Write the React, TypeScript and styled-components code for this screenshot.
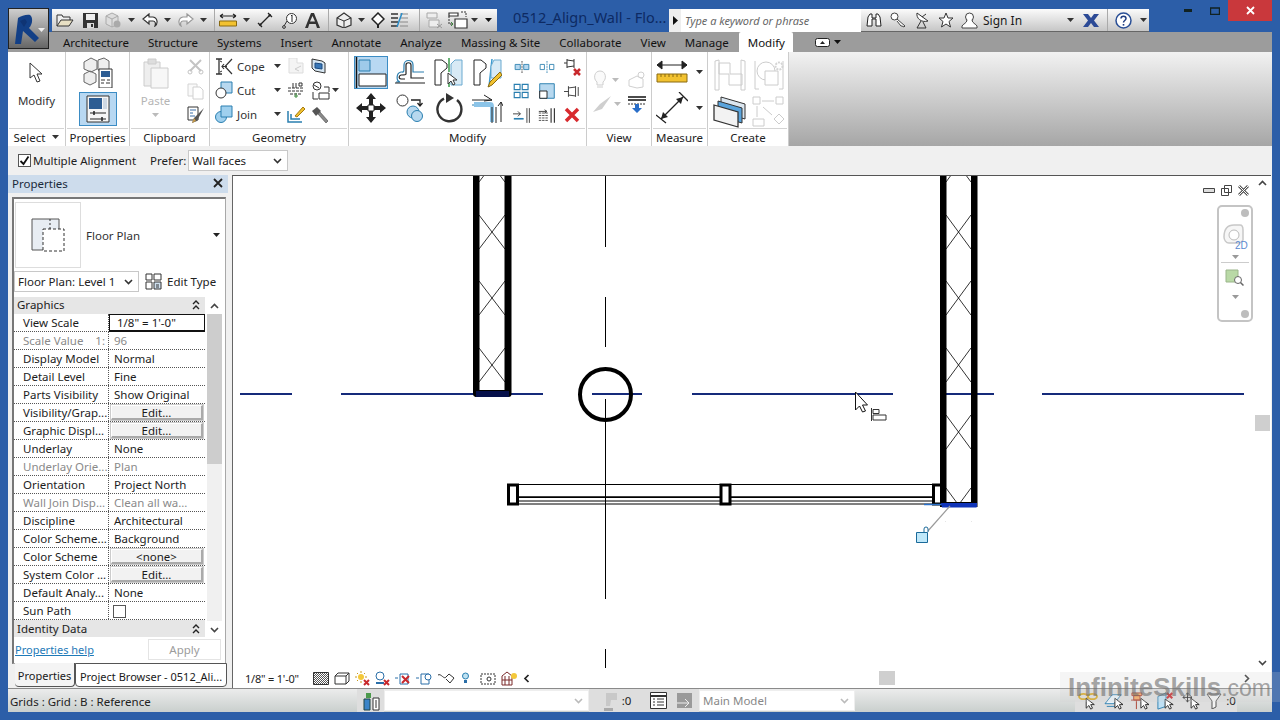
import React from "react"
import styled, { createGlobalStyle } from "styled-components"

const GlobalStyle = createGlobalStyle`
  html, body {
    margin: 0;
    padding: 0;
    width: 1280px;
    height: 720px;
    overflow: hidden;
    font-family: "Noto Sans", "Open Sans", sans-serif;
    font-size: 11.5px;
    color: #1a1a1a;
  }
  * { box-sizing: border-box; }
  svg { display: block; flex: none; }
`

const Window = styled.div`
  position: relative;
  width: 1280px;
  height: 720px;
  background: #2c5ea8;
  display: flex;
  flex-direction: column;
  overflow: hidden;
`

/* ---------- title bar ---------- */

const TitleBar = styled.div`
  height: 32px;
  display: flex;
  align-items: flex-end;
  padding-left: 52px;
  flex: none;
`

const AppButton = styled.div`
  position: absolute;
  left: 8px;
  top: 8px;
  width: 41px;
  height: 41px;
  border: 1px solid #222;
  background: linear-gradient(#cfcfcf, #666);
  display: flex;
  align-items: center;
  justify-content: center;
  padding-right: 5px;
  z-index: 2;
`

const AppCaret = styled.div`
  position: absolute;
  right: 3px;
  top: 19px;
`

const QuickBar = styled.div`
  width: 445px;
  height: 23px;
  display: flex;
  align-items: center;
  border-bottom: 1px solid #666;
  background: linear-gradient(#fbfbfb, #c6c6c6);
`

const Slot = styled.div<{ $w: number }>`
  width: ${({ $w }) => $w}px;
  height: 22px;
  display: flex;
  align-items: center;
  justify-content: center;
  flex: none;
`

const QatSeparator = styled.div`
  width: 1px;
  height: 22px;
  background: #aaa;
  flex: none;
`

const DocTitle = styled.div`
  width: 172px;
  padding: 2px 0 0 16px;
  height: 26px;
  color: #0d2a63;
  font-size: 14.5px;
  line-height: 18px;
  white-space: nowrap;
  flex: none;
`

const ArrowBox = styled.div`
  width: 12px;
  height: 23px;
  background: #eee;
  display: flex;
  align-items: center;
  justify-content: center;
  flex: none;
`

const SearchBox = styled.div`
  width: 180px;
  height: 23px;
  background: #fff;
  color: #666;
  font-style: italic;
  font-size: 11px;
  line-height: 23px;
  padding-left: 4px;
  white-space: nowrap;
  overflow: hidden;
  flex: none;
`

const InfoBar = styled(QuickBar)`
  width: 288px;
`

const SignIn = styled.span`
  width: 85px;
  padding-left: 3px;
  font-size: 12px;
  flex: none;
`

const WindowButtons = styled.div`
  position: absolute;
  right: 8px;
  top: 0;
  display: flex;
  align-items: flex-start;
`

const WindowButton = styled.div<{ $w: number; $close?: boolean }>`
  width: ${({ $w }) => $w}px;
  height: 21px;
  display: flex;
  align-items: center;
  justify-content: center;
  background: ${({ $close }) => ($close ? "#c9383c" : "transparent")};
`

/* ---------- ribbon ---------- */

const TabStrip = styled.div`
  height: 20px;
  margin: 0 8px;
  flex: none;
  background: #9c9c9c;
  display: flex;
  align-items: center;
  gap: 19px;
  padding-left: 55px;
  color: #111;
`

const Tab = styled.div<{ $active?: boolean }>`
  white-space: nowrap;
  height: 20px;
  line-height: 22px;
  ${({ $active }) =>
    $active &&
    `background:#fff;margin:0 -8px 0 -9px;padding:0 8px 0 9px;border-radius:2px 2px 0 0;`}
`

const TabToggle = styled.div`
  margin-left: 11px;
  display: flex;
  align-items: center;
  gap: 4px;
`

const Ribbon = styled.div`
  height: 94px;
  margin: 0 8px;
  flex: none;
  display: flex;
  background: linear-gradient(#f2f2f2, #a6a6a6);
`

const RibbonPanels = styled.div`
  display: flex;
  background: #fff;
  height: 94px;
  flex: none;
`

const Panel = styled.div<{ $w: number }>`
  width: ${({ $w }) => $w}px;
  display: flex;
  flex-direction: column;
  border-right: 1px solid #ccc;
  flex: none;
`

const PanelBody = styled.div`
  height: 76px;
  display: flex;
  flex: none;
`

const PanelLabel = styled.div`
  height: 18px;
  flex: none;
  margin: 0 1px;
  border-top: 1px solid #d4d4d4;
  text-align: center;
  line-height: 17px;
  padding-bottom: 1px;
  color: #222;
  display: flex;
  justify-content: center;
  align-items: center;
  gap: 7px;
`

const BigTool = styled.div<{ $top: number; $gap: number }>`
  width: 100%;
  display: flex;
  flex-direction: column;
  align-items: center;
  padding-top: ${({ $top }) => $top}px;
  gap: ${({ $gap }) => $gap}px;
`

const BigToolLabel = styled.div<{ $off?: boolean }>`
  color: ${({ $off }) => ($off ? "#b5b5b5" : "#333")};
  line-height: 16px;
`

const Stack = styled.div<{ $w: number; $top?: number }>`
  width: ${({ $w }) => $w}px;
  display: flex;
  flex-direction: column;
  align-items: center;
  padding-top: ${({ $top }) => $top || 0}px;
  flex: none;
`

const IconButton = styled.div<{ $on?: boolean }>`
  display: flex;
  align-items: center;
  justify-content: center;
  border: 1px solid ${({ $on }) => ($on ? "#3b8cc4" : "transparent")};
  background: ${({ $on }) => ($on ? "#b8d8f2" : "transparent")};
`

const PropButton = styled(IconButton)`
  width: 38px;
  height: 34px;
  margin-top: 4px;
`

const GeoGrid = styled.div`
  display: grid;
  grid-template-columns: 70px 22px 40px;
  grid-auto-rows: 24px;
  padding: 2px 0 0 5px;
  align-items: center;
`

const GeoCell = styled.div`
  display: flex;
  align-items: center;
  justify-content: center;
`

const GeoCellLeft = styled(GeoCell)`
  justify-content: flex-start;
  padding-left: 4px;
`

const NamedTool = styled.div`
  display: flex;
  align-items: center;
  gap: 4px;
  color: #333;
`

const NamedToolText = styled.span`
  width: 33px;
`

const Split = styled.div<{ $gap?: number }>`
  display: flex;
  align-items: center;
  gap: ${({ $gap }) => $gap || 2}px;
`

const ModifyBig = styled.div`
  display: grid;
  grid-template-columns: 39px 39px 39px 39px;
  grid-template-rows: 35px 36px;
  padding: 3px 0 0 2px;
  justify-items: center;
  align-items: center;
`

const ModifySmall = styled.div`
  display: grid;
  grid-template-columns: 25px 25px 25px;
  grid-auto-rows: 24px;
  padding: 3px 0 0 2px;
  justify-items: center;
  align-items: center;
`

const ViewGrid = styled.div`
  display: grid;
  grid-template-columns: 38px 24px;
  grid-auto-rows: 24px;
  padding: 16px 0 0 0;
  justify-items: center;
  align-items: center;
`

const MeasureCol = styled.div`
  display: flex;
  flex-direction: column;
  padding: 7px 0 0 4px;
  gap: 7px;
`

const CreateGrid = styled.div`
  display: grid;
  grid-template-columns: 40px 38px;
  grid-template-rows: 37px 37px;
  padding: 4px 0 0 2px;
  justify-items: center;
  align-items: center;
`

/* ---------- options bar ---------- */

const OptionsBar = styled.div`
  height: 29px;
  margin: 0 8px;
  flex: none;
  background: #f0f0f0;
  display: flex;
  align-items: center;
  padding-left: 10px;
  color: #222;
`

const CheckBox = styled.div`
  width: 13px;
  height: 13px;
  border: 1px solid #555;
  background: #fff;
  display: flex;
  align-items: center;
  justify-content: center;
  flex: none;
`

const OptionLabel = styled.span<{ $gap: number }>`
  margin-left: ${({ $gap }) => $gap}px;
`

const Combo = styled.div<{ $w: number; $off?: boolean }>`
  width: ${({ $w }) => $w}px;
  height: 21px;
  background: #fff;
  border: 1px solid ${({ $off }) => ($off ? "#eee" : "#c8c8c8")};
  display: flex;
  align-items: center;
  justify-content: space-between;
  padding: 0 5px 0 3px;
  color: ${({ $off }) => ($off ? "#888" : "#222")};
  flex: none;
`

/* ---------- main area ---------- */

const Main = styled.div`
  height: 513px;
  margin: 0 8px;
  flex: none;
  display: flex;
  background: #f0f0f0;
`

const PropertiesDock = styled.div`
  width: 220px;
  display: flex;
  flex-direction: column;
  flex: none;
`

const DockHeader = styled.div`
  height: 18px;
  background: #cddcec;
  display: flex;
  align-items: center;
  justify-content: space-between;
  padding: 0 5px 2px 4px;
  color: #1a2a3a;
  flex: none;
`

const DockBody = styled.div`
  margin: 4px 2px 0 4px;
  height: 467px;
  background: #fff;
  border: 1px solid #a8a8a8;
  border-top: 2px solid #777;
  border-left: 2px solid #777;
  padding: 3px 3px 0 0;
  display: flex;
  flex-direction: column;
  flex: none;
`

const TypeSelector = styled.div`
  height: 66px;
  display: flex;
  align-items: center;
  flex: none;
  padding-right: 2px;
`

const TypeThumb = styled.div`
  width: 66px;
  height: 66px;
  border: 1px solid #ddd;
  margin-left: 1px;
  display: flex;
  align-items: center;
  justify-content: center;
  flex: none;
`

const TypeName = styled.div`
  margin-left: 5px;
  flex: 1;
  color: #333;
`

const InstanceRow = styled.div`
  height: 21px;
  margin-top: 3px;
  display: flex;
  align-items: center;
  flex: none;
`

const EditType = styled.div`
  margin-left: 6px;
  display: flex;
  align-items: center;
  gap: 5px;
  color: #222;
`

const PropScroller = styled.div`
  margin-top: 5px;
  display: flex;
  height: 341px;
  flex: none;
`

const PropList = styled.div`
  width: 191px;
  flex: none;
`

const GroupHeader = styled.div<{ $lift?: boolean }>`
  height: 17px;
  background: #e6e6e6;
  display: flex;
  align-items: center;
  justify-content: space-between;
  padding: 0 5px ${({ $lift }) => ($lift ? 2 : 0)}px 3px;
  color: #222;
`

const PropRow = styled.div`
  height: 18px;
  display: grid;
  grid-template-columns: 95px 96px;
  border-bottom: 1px dotted #555;
  line-height: 17px;
`

const PropName = styled.div<{ $off?: boolean }>`
  padding-left: 9px;
  border-right: 1px dotted #555;
  white-space: pre;
  overflow: hidden;
  color: ${({ $off }) => ($off ? "#8a8a8a" : "#1c1c1c")};
`

const PropValue = styled.div<{ $off?: boolean }>`
  padding-left: 5px;
  white-space: nowrap;
  overflow: hidden;
  color: ${({ $off }) => ($off ? "#8a8a8a" : "#1c1c1c")};
`

const ScaleInput = styled.div`
  border: 1px solid #111;
  border-width: 1px 1px 2px 1px;
  height: 18px;
  padding-left: 7px;
  line-height: 15px;
  background: #fff;
`

const EditButton = styled.div`
  margin: 1px 2px 1px 2px;
  height: 15px;
  background: #f2f2f2;
  border: 1px solid #fff;
  border-right: 2px solid #aaa;
  border-bottom: 2px solid #aaa;
  box-shadow: 0 0 0 1px #ccc;
  text-align: center;
  line-height: 13px;
`

const SmallCheck = styled.div`
  width: 13px;
  height: 13px;
  border: 1px solid #555;
  margin: 3px 0 0 4px;
`

const PanelScroll = styled.div`
  width: 15px;
  margin-left: 2px;
  display: flex;
  flex-direction: column;
  flex: none;
`

const ScrollEnd = styled.div`
  height: 17px;
  display: flex;
  align-items: center;
  justify-content: center;
  flex: none;
`

const ScrollTrack = styled.div`
  flex: 1;
  background: #f0f0f0;
`

const ScrollThumb = styled.div`
  height: 150px;
  background: #cdcdcd;
`

const HelpRow = styled.div`
  height: 23px;
  display: flex;
  align-items: center;
  justify-content: space-between;
  padding-right: 1px;
`

const HelpLink = styled.span`
  color: #1e7ab8;
  text-decoration: underline;
  font-size: 11px;
  margin-left: 1px;
`

const ApplyButton = styled.div`
  width: 73px;
  height: 21px;
  border: 1px solid #e4e4e4;
  text-align: center;
  line-height: 20px;
  color: #9c9c9c;
`

const DockTabs = styled.div`
  height: 24px;
  display: flex;
  align-items: flex-start;
  padding-left: 7px;
  margin-top: -1px;
  font-size: 11px;
  flex: none;
`

const DockTab = styled.div<{ $active?: boolean; $w: number }>`
  width: ${({ $w }) => $w}px;
  height: 24px;
  background: ${({ $active }) => ($active ? "#f4f4f4" : "#fff")};
  border: 1px solid #555;
  border-top: ${({ $active }) => ($active ? "0" : "1px solid #555")};
  border-left: ${({ $active }) => ($active ? "0" : "1px solid #555")};
  border-radius: 0 0 4px 4px;
  text-align: center;
  line-height: 25px;
  white-space: nowrap;
  overflow: hidden;
`

const ViewShell = styled.div`
  width: 1039px;
  margin-left: 4px;
  background: #fff;
  border-left: 1px solid #666;
  border-top: 1px solid #555;
  display: flex;
  flex: none;
`

const ViewColumn = styled.div`
  width: 1021px;
  display: flex;
  flex-direction: column;
  flex: none;
`

const DrawingArea = styled.div`
  position: relative;
  height: 492px;
  flex: none;
`

const ViewControls = styled.div`
  position: absolute;
  right: 5px;
  top: 9px;
  display: flex;
  align-items: center;
  gap: 6px;
`

const NavBar = styled.div`
  position: absolute;
  left: 984px;
  top: 29px;
  width: 36px;
  height: 117px;
  border: 2px solid #c4c4c4;
  border-radius: 5px;
  background: #fff;
  display: flex;
  flex-direction: column;
  align-items: center;
  padding-top: 2px;
`

const NavDivider = styled.div`
  width: 28px;
  height: 1px;
  background: #ccc;
  margin: 3px 0 6px;
`

const NavWheel = styled.div`
  margin: 6px 0 2px;
`

const NavCaret = styled.div`
  margin-top: 8px;
`

const NavBadge = styled.div`
  width: 8px;
  height: 8px;
  border-radius: 50%;
  background: #bdbdbd;
  align-self: flex-end;
  margin-right: 2px;
`

const NavBadgeBottom = styled(NavBadge)`
  margin-top: auto;
  margin-bottom: 2px;
`

const ViewBar = styled.div`
  height: 20px;
  display: flex;
  align-items: center;
  padding-left: 12px;
  font-size: 11px;
  letter-spacing: -0.2px;
  flex: none;
  color: #222;
`

const ViewScaleText = styled.span`
  width: 68px;
  flex: none;
`

const ViewIcons = styled.div`
  display: flex;
  align-items: center;
  gap: 5px;
`

const BulbSlot = styled.div`
  margin: 0 6px 0 2px;
`

const HScroll = styled.div`
  flex: 1;
  display: flex;
  align-items: center;
  justify-content: space-between;
  padding-right: 4px;
  padding-left: 349px;
`

const HThumb = styled.div`
  width: 16px;
  height: 14px;
  background: #cfcfcf;
`

const VScroll = styled.div`
  width: 18px;
  flex: none;
  display: flex;
  flex-direction: column;
  align-items: center;
  justify-content: space-between;
  padding: 4px 2px 22px 0;
`

const VThumb = styled.div`
  width: 15px;
  height: 16px;
  background: #cfcfcf;
`

/* ---------- status bar ---------- */

const StatusBar = styled.div`
  height: 24px;
  margin: 0 8px;
  flex: none;
  background: linear-gradient(#ececec, #c9cfcd);
  border-top: 1px solid #8a8a8a;
  display: flex;
  align-items: center;
  color: #222;
  padding-left: 2px;
`

const StatusText = styled.div`
  width: 347px;
  flex: none;
  padding-top: 2px;
`

const StatusTool = styled.div<{ $w: number }>`
  width: ${({ $w }) => $w}px;
  height: 23px;
  background: #dedede;
  display: flex;
  align-items: center;
  justify-content: center;
  gap: 4px;
  flex: none;
`

const RightTools = styled.div`
  margin-left: auto;
  margin-right: 35px;
  display: flex;
`

const Watermark = styled.div`
  position: absolute;
  right: -1px;
  top: 672px;
  height: 30px;
  padding-left: 8px;
  width: 221px;
  font-family: "Liberation Sans", Arial, sans-serif;
  font-weight: 700;
  font-size: 26px;
  line-height: 30px;
  color: rgba(110, 110, 110, 0.62);
  background: rgba(210, 210, 210, 0.22);
  white-space: nowrap;
  pointer-events: none;
`

const WatermarkThin = styled.span`
  font-weight: 400;
  font-size: 23px;
`

/* ---------- icons ---------- */

const Caret = ({ c = "#333" }: { c?: string }) => (
  <svg width="7" height="4" viewBox="0 0 7 4">
    <path d="M0 0h7L3.5 4z" fill={c} />
  </svg>
)

const Chevron = ({ c = "#444" }: { c?: string }) => (
  <svg width="9" height="6" viewBox="0 0 9 6">
    <path d="M1 1l3.5 3.5L8 1" fill="none" stroke={c} strokeWidth="1.6" />
  </svg>
)

const ChevronLeft = () => (
  <svg width="7" height="9" viewBox="0 0 7 9">
    <path d="M5.500 1L2 4.500 5.500 8" fill="none" stroke="#222" strokeWidth="1.7" />
  </svg>
)

const Up = () => (
  <svg width="9" height="6" viewBox="0 0 9 6">
    <path d="M1 5l3.5-3.5L8 5" fill="none" stroke="#444" strokeWidth="1.6" />
  </svg>
)

const DoubleUp = () => (
  <svg width="8" height="10" viewBox="0 0 8 10">
    <path d="M1 4l3-3 3 3M1 9l3-3 3 3" fill="none" stroke="#222" strokeWidth="1.4" />
  </svg>
)

const Cursor = ({ s = 22 }: { s?: number }) => (
  <svg width={s} height={s} viewBox="0 0 22 22">
    <path d="M4 1v15l4-3 3 7 3-1-3-7h5z" fill="#fff" stroke="#333" strokeWidth="1" />
  </svg>
)

const RevitLogo = () => (
  <svg width="28" height="30" viewBox="0 0 28 30">
    <path d="M3 30L6 4c3-2 9-4 12-3 3 2 3 9-1 13l10 10-4 4-12-11-2 13z" fill="#123f86" />
    <path d="M8 7l5-2 2 3-3 5z" fill="#0f3474" />
  </svg>
)

const OpenIcon = () => (
  <svg width="18" height="16" viewBox="0 0 18 16">
    <path d="M1 14V3h5l1 2h7v3" fill="#eee" stroke="#333" />
    <path d="M1 14l4-6h12l-4 6z" fill="#e8e0c4" stroke="#333" />
  </svg>
)

const SaveIcon = () => (
  <svg width="15" height="15" viewBox="0 0 15 15">
    <path d="M0 0h15v15H0z" fill="#333" />
    <path d="M3 1h9v6H3z" fill="#eee" />
    <path d="M4 10h7v5H4z" fill="#ddd" />
    <path d="M8 11h2v3H8z" fill="#333" />
  </svg>
)

const SyncIcon = () => (
  <svg width="18" height="18" viewBox="0 0 18 18">
    <path d="M2 5l6-3 6 3v8l-6 3-6-3z" fill="#ddd" stroke="#aaa" />
    <path d="M2 5l6 3 6-3M8 8v8" fill="none" stroke="#aaa" />
    <circle cx="13" cy="13" r="3.5" fill="#aaa" />
  </svg>
)

const UndoIcon = ({ flip, c = "#333" }: { flip?: boolean; c?: string }) => (
  <svg width="17" height="14" viewBox="0 0 17 14" style={flip ? { transform: "scaleX(-1)" } : undefined}>
    <path d="M7 1L1 6l6 5V8h4c2 0 3 2 2 5 3-2 3-8-2-9H7z" fill="#fff" stroke={c} strokeWidth="1.2" />
  </svg>
)

const MeasureIcon = () => (
  <svg width="18" height="16" viewBox="0 0 18 16">
    <path d="M1 4h16M1 4l3-2M1 4l3 2M17 4l-3-2M17 4l-3 2" fill="none" stroke="#222" strokeWidth="1.2" />
    <path d="M0.500 9h17v5H.5z" fill="#f2c230" stroke="#8a6a10" />
  </svg>
)

const DimIcon = () => (
  <svg width="18" height="18" viewBox="0 0 18 18">
    <path d="M4 14L14 4M2 12l4 4M12 2l4 4" fill="none" stroke="#222" strokeWidth="1.3" />
    <path d="M3 15l3-1-2-2zM15 3l-3 1 2 2z" fill="#222" />
  </svg>
)

const TagIcon = () => (
  <svg width="17" height="17" viewBox="0 0 17 17">
    <circle cx="10.500" cy="6.500" r="5" fill="#fff" stroke="#333" />
    <path d="M6 9l-3 5" stroke="#333" />
    <circle cx="3" cy="15" r="1.400" fill="none" stroke="#333" />
    <path d="M10 4l1-1v7" fill="none" stroke="#222" />
  </svg>
)

const AIcon = () => (
  <svg width="15" height="15" viewBox="0 0 15 15">
    <path d="M0 15L6 0h3l6 15h-3l-1.300-4H4.300L3 15zM5 8.500h5L7.500 3z" fill="#333" />
  </svg>
)

const HouseIcon = () => (
  <svg width="16" height="16" viewBox="0 0 16 16">
    <path d="M1 6l7-5 7 5v7l-7 3-7-3z" fill="#eee" stroke="#333" strokeWidth="1.2" />
    <path d="M1 6l7 3 7-3M8 9v7" fill="none" stroke="#333" />
  </svg>
)

const SectionIcon = () => (
  <svg width="14" height="16" viewBox="0 0 14 16">
    <path d="M7 1l6 6-6 6-6-6z" fill="#fff" stroke="#222" strokeWidth="1.5" />
    <path d="M7 13v3" stroke="#222" strokeWidth="2" />
  </svg>
)

const ThinIcon = () => (
  <svg width="18" height="14" viewBox="0 0 18 14">
    <path d="M0 1h7M0 5h7M0 9h7M0 13h7" stroke="#333" strokeWidth="1.6" />
    <path d="M9 1h8M9 5h8M9 9h8M9 13h8" stroke="#888" />
    <path d="M11 0L6 14" stroke="#2a8cc8" strokeWidth="1.500" />
  </svg>
)

const SwitchOff = () => (
  <svg width="17" height="17" viewBox="0 0 17 17">
    <path d="M1 1h10v5H1zM3 8h10v7H3z" fill="#eee" stroke="#a8a8a8" />
    <path d="M11 12l5 4m0-4l-5 4" stroke="#999" />
  </svg>
)

const SwitchIcon = () => (
  <svg width="20" height="18" viewBox="0 0 20 18">
    <path d="M1 2h9v3H1zM7 8h12v9H7z" fill="#fff" stroke="#333" strokeWidth="1.2" />
    <path d="M1 5v8h4M13 1h5v5" fill="none" stroke="#333" strokeDasharray="2 1" />
    <path d="M3 11l2 2-2 2" fill="none" stroke="#3b8a3b" />
  </svg>
)

const Binocular = () => (
  <svg width="16" height="16" viewBox="0 0 16 16">
    <path d="M1 14l1-9 2-3h2v4h4V2h2l2 3 1 9h-5V7H6v7z" fill="#fff" stroke="#222" />
  </svg>
)

const KeyIcon = () => (
  <svg width="17" height="16" viewBox="0 0 17 16">
    <circle cx="4.500" cy="4.500" r="3.500" fill="#fff" stroke="#444" />
    <path d="M7 7l8 7-1 1-2-1-1 0-4-5" fill="#fff" stroke="#444" />
  </svg>
)

const DishIcon = () => (
  <svg width="16" height="17" viewBox="0 0 16 17">
    <path d="M3 1c-1 5 4 10 11 8z" fill="#fff" stroke="#333" />
    <path d="M8 5l4-3M7 9l-4 7h9L9 10" fill="none" stroke="#333" />
  </svg>
)

const StarIcon = () => (
  <svg width="16" height="16" viewBox="0 0 16 16">
    <path d="M8 1l2 5h5l-4 3.500L12.500 15 8 12l-4.500 3L5 9.500 1 6h5z" fill="#fff" stroke="#333" />
  </svg>
)

const UserIcon = () => (
  <svg width="17" height="17" viewBox="0 0 17 17">
    <circle cx="8.500" cy="5" r="4" fill="#fff" stroke="#444" />
    <path d="M6 8c0 3-4 4-5 6v2h15v-2c-1-2-5-3-5-6" fill="#fff" stroke="#444" />
  </svg>
)

const XChange = () => (
  <svg width="16" height="13" viewBox="0 0 16 13">
    <path d="M0 0h5l3 4 3-4h5l-5 6.500L16 13h-5L8 9l-3 4H0l5-6.500z" fill="#2c4a96" />
  </svg>
)

const HelpIcon = () => (
  <svg width="17" height="17" viewBox="0 0 17 17">
    <circle cx="8.500" cy="8.500" r="7.500" fill="#fff" stroke="#2a4f96" strokeWidth="1.500" />
    <path d="M6 6.500c0-3 5-3 5 0 0 2-2.500 2-2.500 4" fill="none" stroke="#1f3c80" strokeWidth="1.500" />
    <path d="M7.700 12h1.600v1.600H7.700z" fill="#1f3c80" />
  </svg>
)

const ToggleIcon = () => (
  <svg width="15" height="9" viewBox="0 0 15 9">
    <rect x=".5" y=".5" width="14" height="8" rx="2" fill="#fff" stroke="#222" />
    <path d="M5 6l2.500-3L10 6z" fill="#222" />
  </svg>
)

const FamilyIcon = () => (
  <svg width="30" height="31" viewBox="0 0 30 31">
    <path d="M1 5l7-4 6 3v8l-6 3-7-3zM1 17l6-3 6 3v8l-6 3-6-3zM15 3l6-2 5 3v10l-11-1z" fill="#eee" stroke="#666" />
    <path d="M16 12h13v19H16z" fill="#fff" stroke="#333" />
    <path d="M18 14h9v6h-9z" fill="#2d5d93" />
    <path d="M18 23h4M24 23h3M18 26h3M23 26h4" stroke="#333" />
  </svg>
)

const PropsIcon = () => (
  <svg width="24" height="28" viewBox="0 0 24 28">
    <path d="M1 1h22v26H1z" fill="#f6f6f6" stroke="#333" />
    <path d="M3 3h13v11H3z" fill="#2d5d93" />
    <path d="M17 3h4v11h-4z" fill="#cfd9e4" />
    <path d="M4 18h16M4 24h16" stroke="#222" />
    <path d="M8 16v4M16 22v4" stroke="#222" strokeWidth="1.500" />
  </svg>
)

const PasteIcon = () => (
  <svg width="26" height="31" viewBox="0 0 26 31">
    <path d="M1 4h16v24H1z" fill="#eee" stroke="#ccc" />
    <path d="M5 1h8v5H5z" fill="#ddd" stroke="#ccc" />
    <path d="M8 10h17v20H8z" fill="#f7f7f7" stroke="#ccc" />
  </svg>
)

const ScissorsIcon = () => (
  <svg width="17" height="16" viewBox="0 0 17 16">
    <path d="M3 1l11 11M14 1L3 12" stroke="#c4c4c4" strokeWidth="2" />
    <circle cx="3" cy="13" r="2" fill="none" stroke="#c4c4c4" />
    <circle cx="14" cy="13" r="2" fill="none" stroke="#c4c4c4" />
  </svg>
)

const CopyIcon = () => (
  <svg width="17" height="17" viewBox="0 0 17 17">
    <path d="M1 1h9v12H1z" fill="#fafafa" stroke="#d4d4d4" />
    <path d="M6 4h7l3 3v9H6z" fill="#fff" stroke="#d0d0d0" />
  </svg>
)

const MatchIcon = () => (
  <svg width="18" height="18" viewBox="0 0 18 18">
    <path d="M1 1h10v13H1z" fill="#fff" stroke="#333" />
    <path d="M3 4h6M3 7h3M3 10h5" stroke="#3a6ea8" />
    <path d="M17 2L7 12l-2 5 5-2 2-4z" fill="#555" />
    <path d="M7 12l-2 5 4-2z" fill="#c59a4a" />
  </svg>
)

const CopeIcon = () => (
  <svg width="18" height="17" viewBox="0 0 18 17">
    <path d="M1 1h6M1 16h6M4 1v15" stroke="#333" strokeWidth="1.300" />
    <path d="M7 4L5 3M7 13l-2 1" stroke="#333" />
    <path d="M17 1l-7 7.500L17 16M7 8.500h5M9 6l-2 2.500L9 11" fill="none" stroke="#333" strokeWidth="1.200" />
  </svg>
)

const CutIcon = () => (
  <svg width="18" height="18" viewBox="0 0 18 18">
    <path d="M6 1h11v11H6z" fill="#b7d8ef" stroke="#2a7fb0" />
    <circle cx="6" cy="12" r="5" fill="#fff" stroke="#333" />
  </svg>
)

const JoinIcon = () => (
  <svg width="18" height="18" viewBox="0 0 18 18">
    <circle cx="6" cy="12" r="5.500" fill="#9fd0ee" stroke="#2a7fb0" />
    <path d="M6 1h11v11H6z" fill="#9fd0ee" stroke="#2a7fb0" />
    <path d="M7 2h9v9H7z" fill="#9fd0ee" />
  </svg>
)

const WallJoinOff = () => (
  <svg width="18" height="16" viewBox="0 0 18 16">
    <path d="M2 0h8v5h6v10H2z" fill="#f4f4f4" stroke="#ddd" />
    <path d="M14 8l-6 3 4 2" fill="none" stroke="#ccc" />
  </svg>
)

const WallOpenIcon = () => (
  <svg width="15" height="16" viewBox="0 0 15 16">
    <path d="M1 1l10 2 3 2v10L4 13 1 10z" fill="#d6e6f2" stroke="#333" />
    <path d="M4 5l7 1v5l-7-1z" fill="#3a78b8" stroke="#1a4a80" />
  </svg>
)

const SplitFaceIcon = () => (
  <svg width="18" height="18" viewBox="0 0 18 18">
    <path d="M1 7h16M1 10h16M3 13h12" stroke="#333" strokeDasharray="3 1" />
    <path d="M6 2v5M9 2v5M12 2h3v3h-3z" fill="none" stroke="#333" />
    <path d="M9 12v5M7 15h4" stroke="#3a8a3a" />
  </svg>
)

const JoinGeo = () => (
  <svg width="19" height="19" viewBox="0 0 19 19">
    <circle cx="6" cy="5" r="4" fill="#fff" stroke="#333" />
    <path d="M3 4l5 3M8 12h10v6H8z" fill="#fff" stroke="#333" />
    <path d="M2 11v7h5" fill="none" stroke="#333" />
    <path d="M13 6h5v5" fill="none" stroke="#333" />
  </svg>
)

const PaintIcon = () => (
  <svg width="18" height="18" viewBox="0 0 18 18">
    <path d="M1 6v11h14" fill="none" stroke="#2a7fb0" strokeWidth="1.500" />
    <path d="M4 9v5h9" fill="none" stroke="#2a7fb0" strokeWidth="1.500" />
    <path d="M8 11l8-9 2 2-8 8z" fill="#f2c230" stroke="#a47a10" />
  </svg>
)

const HammerIcon = () => (
  <svg width="17" height="17" viewBox="0 0 17 17">
    <path d="M1 5l5-4 4 4-5 5z" fill="#555" />
    <path d="M7 8l2-2 8 9-2 2z" fill="#8a8a8a" stroke="#444" strokeWidth=".6" />
  </svg>
)

const AlignIcon = () => (
  <svg width="32" height="31" viewBox="0 0 32 31">
    <path d="M1.500 0v31" stroke="#111" strokeWidth="1.500" />
    <path d="M4 3h11v11H4z" fill="#9ecaea" stroke="#2a7fb0" />
    <path d="M4 17h27v12H4z" fill="#fff" stroke="#222" />
  </svg>
)

const OffsetIcon = () => (
  <svg width="31" height="27" viewBox="0 0 31 27">
    <path d="M2 23h4c-4-1-4-9 1-10 3 0 3 1 3-7 0-6 9-6 9 0v7h11" fill="none" stroke="#2a7fb0" strokeWidth="1.200" />
    <path d="M1 24h30M30 19H17V6c0-3-5-3-5 0v9c0 1-3 1-5 1-3 1-2 4 0 4h4" fill="none" stroke="#222" strokeWidth="1.200" />
  </svg>
)

const MirrorPick = () => (
  <svg width="29" height="30" viewBox="0 0 29 30">
    <path d="M1 2h7l5 4v4l-6 5v12H1z" fill="#fff" stroke="#222" />
    <path d="M15 0v29" stroke="#3a9a4a" strokeWidth="1.500" strokeDasharray="14 2" />
    <path d="M28 2h-7l-4 4v21h11z" fill="#d8eaf5" stroke="#6aaad0" />
    <path d="M14 15v11l3-3 2 4 2-1-2-4h4z" fill="#fff" stroke="#333" />
  </svg>
)

const MirrorDraw = () => (
  <svg width="29" height="30" viewBox="0 0 29 30">
    <path d="M1 2h7l5 4v4l-6 5v12H1z" fill="#fff" stroke="#222" />
    <path d="M16 29L19 1" stroke="#3a9ad0" strokeWidth="1.500" />
    <path d="M28 2h-7l-3 6v12h10z" fill="#d8eaf5" stroke="#6aaad0" />
    <path d="M15 29l2-5 10-10 2 3-10 10z" fill="#f2c230" stroke="#8a6a10" />
  </svg>
)

const MoveIcon = () => (
  <svg width="30" height="30" viewBox="0 0 30 30">
    <path d="M15 0l5 6h-3v6h-4V6h-3zM15 30l5-6h-3v-6h-4v6h-3zM0 15l6-5v3h6v4H6v3zM30 15l-6-5v3h-6v4h6v3z" fill="#222" />
    <path d="M12 12h6v6h-6z" fill="#fff" stroke="#222" />
  </svg>
)

const CopyModify = () => (
  <svg width="28" height="28" viewBox="0 0 28 28">
    <circle cx="6.500" cy="6.500" r="5.500" fill="#fff" stroke="#333" />
    <circle cx="17" cy="18" r="6" fill="#b7d8ef" stroke="#2a7fb0" />
    <circle cx="21" cy="22" r="5.500" fill="#b7d8ef" stroke="#2a7fb0" />
    <path d="M15 6h9v5M21.500 9l2.500 3 2.500-3" fill="none" stroke="#222" strokeWidth="1.300" />
  </svg>
)

const RotateIcon = () => (
  <svg width="28" height="30" viewBox="0 0 28 30">
    <path d="M9 5.600A12 12 0 1 0 22 7" fill="none" stroke="#333" strokeWidth="2.400" />
    <path d="M11 0v10l8-5z" fill="#333" />
  </svg>
)

const TrimIcon = () => (
  <svg width="31" height="30" viewBox="0 0 31 30">
    <path d="M0 7h20M12 2l8 5-8 1" fill="none" stroke="#222" />
    <path d="M0 12h12" stroke="#2a7fb0" />
    <path d="M2 9h16c4 0 4 3 4 6v14h-4V14H2z" fill="#8cc4e8" />
    <path d="M20 14v16M24 14v16" stroke="#222" />
    <path d="M29 9v20M26 13l3-4 2 4" fill="none" stroke="#222" />
  </svg>
)

const SmallAlignA = () => (
  <svg width="16" height="12" viewBox="0 0 18 14">
    <path d="M1 4h6v6H1zM11 4h6v6h-6z" fill="#b7d8ef" stroke="#2a7fb0" />
    <path d="M9 0v14" stroke="#333" strokeDasharray="2 1" />
  </svg>
)

const SmallAlignB = () => (
  <svg width="16" height="12" viewBox="0 0 18 14">
    <path d="M1 4h5v6H1zM12 4h5v6h-5z" fill="#fff" stroke="#2a7fb0" />
    <path d="M9 0v14" stroke="#2a7fb0" strokeDasharray="2 1" />
  </svg>
)

const PinOff = () => (
  <svg width="18" height="18" viewBox="0 0 18 18">
    <path d="M4 1v9M11 1v9M1 5h3M4 2l7 1M4 9l7-1" fill="none" stroke="#333" />
    <path d="M11 11l6 6m0-6l-6 6" stroke="#c8282c" strokeWidth="2.500" />
  </svg>
)

const ArrayIcon = () => (
  <svg width="17" height="16" viewBox="0 0 22 22">
    <path d="M1 2h8v7H1zM12 2h8v7h-8zM1 13h8v7H1zM12 13h8v7h-8z" fill="#fff" stroke="#2a7fb0" strokeWidth="1.600" />
  </svg>
)

const ScaleIcon = () => (
  <svg width="16" height="16" viewBox="0 0 22 22">
    <path d="M1 1h20v20H1z" fill="#b7d8ef" stroke="#2a7fb0" strokeWidth="1.300" />
    <path d="M1 11h10v10H1z" fill="#fff" stroke="#222" strokeWidth="1.300" />
  </svg>
)

const PinIcon = () => (
  <svg width="16" height="13" viewBox="0 0 18 14">
    <path d="M5 1v12M13 1v12M0 7h5M5 3l8-1M5 11l8 1M16 2v10" fill="none" stroke="#333" />
  </svg>
)

const SplitA = () => (
  <svg width="18" height="17" viewBox="0 0 22 20">
    <path d="M0 8h9M6 5l3 3-3 3" fill="none" stroke="#222" />
    <path d="M1 14h12" stroke="#2a7fb0" strokeWidth="2" />
    <path d="M17 1v18M20 1v18" stroke="#222" />
  </svg>
)

const SplitB = () => (
  <svg width="18" height="17" viewBox="0 0 22 20">
    <path d="M1 7h11M1 10h11M1 13h11M1 16h11" stroke="#333" strokeDasharray="3 1" />
    <path d="M8 3l3 2-3 2M1 5h9" fill="none" stroke="#222" />
    <path d="M16 1v18M20 1v18" stroke="#222" strokeWidth="1.300" />
  </svg>
)

const DeleteIcon = () => (
  <svg width="16" height="16" viewBox="0 0 16 16">
    <path d="M2 2l12 12m0-12L2 14" stroke="#d82a2e" strokeWidth="3.500" />
  </svg>
)

const BulbIcon = () => (
  <svg width="14" height="20" viewBox="0 0 14 20">
    <path d="M4 12C0 9 1 1 7 1s7 8 3 11v3H4zM4 17h6" fill="#fafafa" stroke="#cfcfcf" />
  </svg>
)

const HideIcon = () => (
  <svg width="18" height="18" viewBox="0 0 18 18">
    <path d="M1 9l8-4 6 3v8l-6 1-8-2z" fill="none" stroke="#d0d0d0" />
    <circle cx="13" cy="4" r="3" fill="none" stroke="#d0d0d0" />
  </svg>
)

const BrushIcon = () => (
  <svg width="20" height="18" viewBox="0 0 20 18">
    <path d="M19 1L8 9l-7 8 9-3z" fill="#cfcfcf" />
  </svg>
)

const CutProfile = () => (
  <svg width="18" height="17" viewBox="0 0 18 17">
    <path d="M0 1h18M0 4h18" stroke="#111" strokeWidth="1.500" />
    <path d="M0 8h18" stroke="#333" strokeDasharray="2 1" />
    <path d="M7 8h4v4h3l-5 5-5-5h3z" fill="#2a6ec8" />
  </svg>
)

const MeasureBig = () => (
  <svg width="32" height="26" viewBox="0 0 32 26">
    <path d="M1 6h30M1 6l5-4v8zM31 6l-5-4v8z" fill="#222" stroke="#222" />
    <path d="M1 15h30v8H1z" fill="#f2c230" stroke="#8a6a10" />
    <path d="M5 15v3M9 15v3M13 15v3M17 15v3M21 15v3M25 15v3" stroke="#8a6a10" />
  </svg>
)

const AlignedDim = () => (
  <svg width="32" height="32" viewBox="0 0 32 32">
    <path d="M5 27L27 5M0 23l10 8M23 0l9 9" fill="none" stroke="#222" strokeWidth="1.300" />
    <path d="M5 27l7-2-5-5zM27 5l-7 2 5 5z" fill="#222" />
  </svg>
)

const CreateGroup = () => (
  <svg width="32" height="32" viewBox="0 0 32 32">
    <path d="M1 2l4-1v30H1zM31 2l-4-1v30h4zM5 4h11v11h12v11H15V15H5z" fill="#fff" stroke="#ccc" />
  </svg>
)

const CreateSimilar = () => (
  <svg width="32" height="32" viewBox="0 0 32 32">
    <circle cx="13" cy="12" r="9" fill="none" stroke="#ccc" />
    <path d="M12 12h13v14H12z" fill="#fff" stroke="#ccc" />
    <path d="M2 2v28h4M30 2v28h-4" fill="none" stroke="#ccc" />
    <circle cx="26" cy="7" r="3.500" fill="none" stroke="#d4d4d4" strokeWidth="2" strokeDasharray="2 1" />
  </svg>
)

const CreateAssembly = () => (
  <svg width="34" height="32" viewBox="0 0 34 32">
    <path d="M8 1l24 7v15L8 16z" fill="#dbe6ef" stroke="#333" />
    <path d="M5 5l24 7v15L5 20z" fill="#5aa4dc" stroke="#333" />
    <path d="M1 9l24 7v15L1 24z" fill="#f2f2f2" stroke="#333" strokeWidth="1.300" />
  </svg>
)

const CreateParts = () => (
  <svg width="34" height="32" viewBox="0 0 34 32">
    <path d="M1 1h7v7H1zM24 1h7v7h-7zM1 23h11v7H1zM22 23l5-5 5 5-5 5z" fill="#fff" stroke="#ccc" />
    <path d="M10 5h12M5 10v11M11 11l9 8" stroke="#ccc" />
  </svg>
)

const PlanThumb = () => (
  <svg width="34" height="36" viewBox="0 0 34 36">
    <path d="M1 2h27v31H1z" fill="#e8edf3" stroke="#555" />
    <path d="M12 12h21v22H12z" fill="#fff" stroke="#333" strokeDasharray="3 2" />
    <path d="M19 2v10" stroke="#333" strokeDasharray="2 2" />
  </svg>
)

const EditTypeIcon = () => (
  <svg width="17" height="17" viewBox="0 0 17 17">
    <path d="M1 1h6v6H1zM9 1h7v6H9zM1 9h6v7H1z" fill="#fff" stroke="#333" />
    <path d="M9 9h7v7H9z" fill="#cfe0ef" stroke="#333" />
    <path d="M11 12h3M11 14h3" stroke="#333" />
  </svg>
)

const CloseX = () => (
  <svg width="10" height="10" viewBox="0 0 10 10">
    <path d="M1 1l8 8m0-8L1 9" stroke="#222" strokeWidth="1.800" />
  </svg>
)

const WheelIcon = () => (
  <svg width="26" height="30" viewBox="0 0 26 30">
    <path d="M2 14C2 5 6 2 12 2h6c2 0 3 2 3 5v10c-1 2-3 3-5 3H7c-3 0-5-3-5-6z" fill="#f6f6f6" stroke="#c8c8c8" strokeWidth="1.500" />
    <circle cx="12" cy="12" r="5" fill="#fff" stroke="#bbb" />
    <text x="13" y="26" fontSize="10" fontFamily="Liberation Sans" fill="#5a8ad0">2D</text>
  </svg>
)

const ZoomRegion = () => (
  <svg width="20" height="18" viewBox="0 0 20 18">
    <path d="M1 1h12v12H1z" fill="#b9d9a6" stroke="#9ab58a" />
    <circle cx="13" cy="11" r="3.500" fill="#fff" stroke="#666" />
    <path d="M15.500 13.500l3 3" stroke="#666" strokeWidth="1.500" />
  </svg>
)

const VHatch = () => (
  <svg width="16" height="13" viewBox="0 0 16 13">
    <defs>
      <pattern id="chk" width="2" height="2" patternUnits="userSpaceOnUse">
        <path d="M0 0h1v1H0zM1 1h1v1H1z" fill="#555" />
      </pattern>
    </defs>
    <path d="M.5.500h15v12H.5z" fill="url(#chk)" stroke="#333" />
  </svg>
)

const VCube = () => (
  <svg width="16" height="13" viewBox="0 0 16 13">
    <path d="M1 4l3-3h11v8l-3 3H1zM1 4h11v8M12 4l3-3" fill="#fff" stroke="#333" />
  </svg>
)

const VSun = () => (
  <svg width="15" height="15" viewBox="0 0 15 15">
    <circle cx="6" cy="6" r="3" fill="#f4c83a" />
    <path d="M6 0v2M6 10v2M0 6h2M10 6h2M2 2l1 1M10 2L9 3M2 10l1-1" stroke="#c89a20" />
    <path d="M9 9l5 5m0-5l-5 5" stroke="#c8282c" strokeWidth="2" />
  </svg>
)

const VShadow = () => (
  <svg width="15" height="15" viewBox="0 0 15 15">
    <circle cx="5" cy="5" r="4" fill="#fff" stroke="#2a6ea8" />
    <path d="M1 12h8" stroke="#2a6ea8" strokeWidth="2" />
    <path d="M9 9l5 5m0-5l-5 5" stroke="#c8282c" strokeWidth="2" />
  </svg>
)

const VCrop = ({ off }: { off?: boolean }) => (
  <svg width="16" height="15" viewBox="0 0 16 15">
    <path d="M0 7h3M5 3h8v10H5z" fill="#fff" stroke="#2a6ea8" />
    {off ? (
      <path d="M7 5l7 7m0-7l-7 7" stroke="#c8282c" strokeWidth="2" />
    ) : (
      <circle cx="12" cy="6" r="3" fill="#fff" stroke="#2a6ea8" />
    )}
  </svg>
)

const VGlasses = () => (
  <svg width="18" height="13" viewBox="0 0 18 13">
    <path d="M1 3c3-2 6 5 8 2l3-3 5 4-4 5-4-4" fill="none" stroke="#333" />
  </svg>
)

const VBulb = () => (
  <svg width="7" height="12" viewBox="0 0 7 12">
    <circle cx="3.500" cy="4" r="3" fill="#bfe2f2" stroke="#2a7fb0" />
    <path d="M2 8h3v3H2z" fill="#2a6ea8" />
  </svg>
)

const VCropFrame = () => (
  <svg width="16" height="14" viewBox="0 0 16 14">
    <path d="M1 3h14v10H1z" fill="#fff" stroke="#333" strokeDasharray="2 1" />
    <circle cx="9" cy="8" r="2" fill="none" stroke="#333" />
  </svg>
)

const VBuilding = () => (
  <svg width="17" height="15" viewBox="0 0 17 15">
    <path d="M1 5l5-4 5 4v9H1zM4 5v9M8 5v9M1 9h10" fill="#fff" stroke="#7a2a2a" />
    <circle cx="13" cy="5" r="3" fill="#f4c83a" />
  </svg>
)

const WorksetIcon = () => (
  <svg width="20" height="20" viewBox="0 0 20 20">
    <path d="M3 8h6v11H3z" fill="#3a84c8" stroke="#244" />
    <path d="M5 2h5v5H5z" fill="#4c9a4c" />
    <path d="M12 7h6v12h-6z" fill="#fff" stroke="#333" />
    <path d="M15 9v8" stroke="#333" />
  </svg>
)

const DesignOptIcon = () => (
  <svg width="14" height="20" viewBox="0 0 14 20">
    <path d="M2 2h11v7H7l-1 6H2z" fill="#c8c8c8" />
    <path d="M0 17h9v3H0z" fill="#aaa" />
  </svg>
)

const ListIcon = () => (
  <svg width="17" height="17" viewBox="0 0 17 17">
    <path d="M.5.500h16v16H.5z" fill="#fff" stroke="#333" />
    <path d="M1 4h15" stroke="#333" strokeWidth="2" />
    <path d="M3 7h2M7 7h7M3 10h2M7 10h7M3 13h2M7 13h7" stroke="#333" />
  </svg>
)

const ModelOff = () => (
  <svg width="17" height="17" viewBox="0 0 17 17">
    <path d="M1 1h15v15H1z" fill="#9a9a9a" />
    <path d="M9 7l4 4-4 4M1 11h12" fill="none" stroke="#eee" />
  </svg>
)

const PickLink = () => (
  <svg width="20" height="18" viewBox="0 0 22 20">
    <ellipse cx="6" cy="5" rx="5" ry="3" fill="none" stroke="#d8a820" strokeWidth="2" />
    <ellipse cx="16" cy="5" rx="5" ry="3" fill="none" stroke="#d8a820" strokeWidth="2" />
    <path d="M9 7v11l3-3 2 4 2-1-2-4h4z" fill="#fff" stroke="#222" />
  </svg>
)

const PickUnderlay = () => (
  <svg width="20" height="18" viewBox="0 0 22 20">
    <path d="M1 13L9 3h10L11 13zM3 16h9" fill="#e8f2f9" stroke="#2a7fb0" />
    <path d="M12 7v11l3-3 2 4 2-1-2-4h4z" fill="#fff" stroke="#222" />
  </svg>
)

const PickPin = () => (
  <svg width="20" height="18" viewBox="0 0 22 20">
    <path d="M2 1h11v3H2zM4 4h7v5H4zM1 9h13M7 9v10" fill="#f4a860" stroke="#a83a2a" />
    <path d="M12 7v11l3-3 2 4 2-1-2-4h4z" fill="#fff" stroke="#222" />
  </svg>
)

const PickFace = () => (
  <svg width="20" height="18" viewBox="0 0 22 20">
    <path d="M2 5l9-4v15l-9 3z" fill="#bfe0f4" stroke="#2a7fb0" />
    <path d="M12 1l6 6m0-6l-6 6" stroke="#c8282c" strokeWidth="2.400" />
    <path d="M10 8v10l3-3 2 4 2-1-2-4h4z" fill="#fff" stroke="#222" />
  </svg>
)

const DragIcon = () => (
  <svg width="20" height="18" viewBox="0 0 22 20">
    <path d="M6 1v10M1 6h10M6 1L4 3M6 1l2 2M1 6l2-2M1 6l2 2M11 6L9 4M11 6L9 8M6 11L4 9M6 11l2-2" stroke="#222" />
    <path d="M10 7v11l3-3 2 4 2-1-2-4h4z" fill="#fff" stroke="#222" />
  </svg>
)

const FilterIcon = () => (
  <svg width="16" height="16" viewBox="0 0 16 16">
    <path d="M1 1h14l-5 7v6l-4 2V8z" fill="#f4f4f4" stroke="#555" />
  </svg>
)

const Arrow = () => (
  <svg width="5" height="9" viewBox="0 0 5 9">
    <path d="M0 0l5 4.500L0 9z" fill="#111" />
  </svg>
)

/* ---------- canvas drawing ---------- */

const hatchCenters = (ys: number[], x0: number, x1: number) =>
  ys.map((y) => `M${x0} ${y - 17}L${x1} ${y + 17}M${x1} ${y - 17}L${x0} ${y + 17}`).join("")

const gridSegments = [
  [240, 292],
  [341, 543],
  [592, 642],
  [692, 893],
  [944, 994],
  [1042, 1244],
]

const Mullion = ({ x, w }: { x: number; w: number }) => (
  <rect x={x} y={485} width={w} height={19} fill="#fff" stroke="#000" strokeWidth="3" />
)

const Plan = () => (
  <svg width="1021" height="492" viewBox="233 176 1021 492">
    {gridSegments.map(([a, b]) => (
      <path key={a} d={`M${a} 394H${b}`} stroke="#152a7a" strokeWidth="2" />
    ))}
    <path d="M605.500 176V247M605.500 297V347M605.500 399V599M605.500 649V668" stroke="#000" strokeWidth="1" />
    <circle cx="605.500" cy="394.500" r="25.500" fill="none" stroke="#000" strokeWidth="4" />
    {/* curtain wall */}
    <path d="M510 484.500H940M510 497.500H940M510 501H940M510 504H940" stroke="#000" strokeWidth="1" />
    <path d="M510 497H940" stroke="#000" strokeWidth="1.500" />
    <Mullion x={508.5} w={9} />
    <Mullion x={721} w={9} />
    <Mullion x={933.5} w={9} />
    {/* left wall */}
    <path d={hatchCenters([165, 232, 298, 365], 479, 505)} stroke="#000" strokeWidth=".8" fill="none" />
    <path d="M473 176h6.500v214h25V176h7v218a3 3 0 0 1-3 3h-33a3 3 0 0 1-2.500-3z" fill="#000" />
    <path d="M476 391h33v6h-33z" fill="#06104a" />
    {/* right wall */}
    <path d={hatchCenters([165, 232, 298, 365, 432, 505], 946, 971)} stroke="#000" strokeWidth=".8" fill="none" />
    <path d="M946 507h25v20h-25z" fill="#fff" />
    <path d="M940 176h6.500V502h24.500V176h6.500V507H940z" fill="#000" />
    <path d="M924 504.500H942" stroke="#2a70c8" strokeWidth="1.500" />
    <path d="M941 503h36v3.500a1 1 0 0 1-1 1h-34z" fill="#1034b8" />
    {/* align lock */}
    <path d="M950 506l-23 26" stroke="#9a9a9a" strokeWidth="1.200" />
    <path d="M916.500 532.500h11v10h-11z" fill="#bfe8fa" stroke="#1a6a9a" />
    <path d="M924 532v-3a2 2 0 0 1 4 0v3" fill="#fff" stroke="#1a6a9a" />
    {/* pointer with align hint */}
    <path d="M855.500 392v18l4-4 3 6 3-1-3-6h5z" fill="#fff" stroke="#111" />
    <path d="M871.500 408v13" stroke="#333" />
    <path d="M873 409.500h6v4h-6zM873 415h13v5h-13z" fill="#fff" stroke="#333" />
  </svg>
)

/* ---------- data ---------- */

interface IProp {
  name: string
  value?: string
  off?: boolean
  kind?: "input" | "button" | "check"
}

const graphicsProps: IProp[] = [
  { name: "View Scale", value: `1/8" = 1'-0"`, kind: "input" },
  { name: "Scale Value    1:", value: "96", off: true },
  { name: "Display Model", value: "Normal" },
  { name: "Detail Level", value: "Fine" },
  { name: "Parts Visibility", value: "Show Original" },
  { name: "Visibility/Grap...", value: "Edit...", kind: "button" },
  { name: "Graphic Displ...", value: "Edit...", kind: "button" },
  { name: "Underlay", value: "None" },
  { name: "Underlay Orie...", value: "Plan", off: true },
  { name: "Orientation", value: "Project North" },
  { name: "Wall Join Disp...", value: "Clean all wa...", off: true },
  { name: "Discipline", value: "Architectural" },
  { name: "Color Scheme...", value: "Background" },
  { name: "Color Scheme", value: "<none>", kind: "button" },
  { name: "System Color ...", value: "Edit...", kind: "button" },
  { name: "Default Analy...", value: "None" },
  { name: "Sun Path", kind: "check" },
]

const tabs = [
  "Architecture",
  "Structure",
  "Systems",
  "Insert",
  "Annotate",
  "Analyze",
  "Massing & Site",
  "Collaborate",
  "View",
  "Manage",
]

const renderValue = (p: IProp) => {
  if (p.kind === "input") return <ScaleInput>{p.value}</ScaleInput>
  if (p.kind === "button") return <EditButton>{p.value}</EditButton>
  if (p.kind === "check") return <SmallCheck />
  return <PropValue $off={p.off}>{p.value}</PropValue>
}

const App: React.FC = () => (
  <Window>
    <GlobalStyle />

    <AppButton>
      <RevitLogo />
      <AppCaret><Caret c="#eee" /></AppCaret>
    </AppButton>

    <TitleBar>
      <QuickBar>
        <Slot $w={26}><OpenIcon /></Slot>
        <Slot $w={24}><SaveIcon /></Slot>
        <Slot $w={22}><SyncIcon /></Slot>
        <Slot $w={14}><Caret /></Slot>
        <Slot $w={24}><UndoIcon /></Slot>
        <Slot $w={10}><Caret /></Slot>
        <Slot $w={26}><UndoIcon flip c="#999" /></Slot>
        <Slot $w={10}><Caret /></Slot>
        <Slot $w={6} />
        <QatSeparator />
        <Slot $w={26}><MeasureIcon /></Slot>
        <Slot $w={10}><Caret /></Slot>
        <Slot $w={28}><DimIcon /></Slot>
        <Slot $w={20}><TagIcon /></Slot>
        <Slot $w={26}><AIcon /></Slot>
        <Slot $w={3} />
        <QatSeparator />
        <Slot $w={4} />
        <Slot $w={22}><HouseIcon /></Slot>
        <Slot $w={12}><Caret /></Slot>
        <Slot $w={22}><SectionIcon /></Slot>
        <Slot $w={22}><ThinIcon /></Slot>
        <Slot $w={8} />
        <QatSeparator />
        <Slot $w={28}><SwitchOff /></Slot>
        <Slot $w={20}><SwitchIcon /></Slot>
        <Slot $w={12}><Caret /></Slot>
        <Slot $w={17}><Caret c="#111" /></Slot>
      </QuickBar>
      <DocTitle>0512_Align_Wall - Flo...</DocTitle>
      <ArrowBox><Arrow /></ArrowBox>
      <SearchBox>Type a keyword or phrase</SearchBox>
      <InfoBar>
        <Slot $w={25}><Binocular /></Slot>
        <Slot $w={24}><KeyIcon /></Slot>
        <Slot $w={24}><DishIcon /></Slot>
        <Slot $w={24}><StarIcon /></Slot>
        <Slot $w={22}><UserIcon /></Slot>
        <SignIn>Sign In</SignIn>
        <Slot $w={10}><Caret /></Slot>
        <Slot $w={32}><XChange /></Slot>
        <QatSeparator />
        <Slot $w={30}><HelpIcon /></Slot>
        <Slot $w={10}><Caret /></Slot>
      </InfoBar>
    </TitleBar>

    <WindowButtons>
      <WindowButton $w={26}>
        <svg width="8" height="3" viewBox="0 0 8 3"><path d="M0 0h8v3H0z" fill="#122" /></svg>
      </WindowButton>
      <WindowButton $w={27}>
        <svg width="10" height="8" viewBox="0 0 10 8"><path d="M.5 1h9v6.500h-9z" fill="none" stroke="#122" strokeWidth="1.400" /></svg>
      </WindowButton>
      <WindowButton $w={44} $close>
        <svg width="9" height="9" viewBox="0 0 9 9"><path d="M1 1l7 7m0-7L1 8" stroke="#fff" strokeWidth="1.800" /></svg>
      </WindowButton>
    </WindowButtons>

    <TabStrip>
      {tabs.map((t) => (
        <Tab key={t}>{t}</Tab>
      ))}
      <Tab $active>Modify</Tab>
      <TabToggle>
        <ToggleIcon />
        <Caret c="#111" />
      </TabToggle>
    </TabStrip>

    <Ribbon>
      <RibbonPanels>
        <Panel $w={58}>
          <PanelBody>
            <BigTool $top={10} $gap={9}>
              <Cursor />
              <BigToolLabel>Modify</BigToolLabel>
            </BigTool>
          </PanelBody>
          <PanelLabel>Select <Caret c="#333" /></PanelLabel>
        </Panel>

        <Panel $w={64}>
          <PanelBody>
            <Stack $w={63} $top={5}>
              <FamilyIcon />
              <PropButton $on><PropsIcon /></PropButton>
            </Stack>
          </PanelBody>
          <PanelLabel>Properties</PanelLabel>
        </Panel>

        <Panel $w={80}>
          <PanelBody>
            <Stack $w={51}>
              <BigTool $top={6} $gap={4}>
                <PasteIcon />
                <BigToolLabel $off>Paste</BigToolLabel>
                <Caret c="#bbb" />
              </BigTool>
            </Stack>
            <ModifySmall>
              <ScissorsIcon />
              <span />
              <span />
              <CopyIcon />
              <span />
              <span />
              <MatchIcon />
            </ModifySmall>
          </PanelBody>
          <PanelLabel>Clipboard</PanelLabel>
        </Panel>

        <Panel $w={139}>
          <PanelBody>
            <GeoGrid>
              <NamedTool><CopeIcon /><NamedToolText>Cope</NamedToolText><Caret /></NamedTool>
              <GeoCell><WallJoinOff /></GeoCell>
              <GeoCellLeft><WallOpenIcon /></GeoCellLeft>
              <NamedTool><CutIcon /><NamedToolText>Cut</NamedToolText><Caret /></NamedTool>
              <GeoCell><SplitFaceIcon /></GeoCell>
              <GeoCellLeft><Split><JoinGeo /><Caret /></Split></GeoCellLeft>
              <NamedTool><JoinIcon /><NamedToolText>Join</NamedToolText><Caret /></NamedTool>
              <GeoCell><PaintIcon /></GeoCell>
              <GeoCellLeft><HammerIcon /></GeoCellLeft>
            </GeoGrid>
          </PanelBody>
          <PanelLabel>Geometry</PanelLabel>
        </Panel>

        <Panel $w={238}>
          <PanelBody>
            <ModifyBig>
              <IconButton $on><AlignIcon /></IconButton>
              <OffsetIcon />
              <MirrorPick />
              <MirrorDraw />
              <MoveIcon />
              <CopyModify />
              <RotateIcon />
              <TrimIcon />
            </ModifyBig>
            <ModifySmall>
              <SmallAlignA />
              <SmallAlignB />
              <PinOff />
              <ArrayIcon />
              <ScaleIcon />
              <PinIcon />
              <SplitA />
              <SplitB />
              <DeleteIcon />
            </ModifySmall>
          </PanelBody>
          <PanelLabel>Modify</PanelLabel>
        </Panel>

        <Panel $w={65}>
          <PanelBody>
            <ViewGrid>
              <Split $gap={5}><BulbIcon /><Caret c="#bbb" /></Split>
              <HideIcon />
              <Split><BrushIcon /><Caret c="#bbb" /></Split>
              <CutProfile />
            </ViewGrid>
          </PanelBody>
          <PanelLabel>View</PanelLabel>
        </Panel>

        <Panel $w={56}>
          <PanelBody>
            <MeasureCol>
              <Split $gap={8}><MeasureBig /><Caret /></Split>
              <Split $gap={8}><AlignedDim /><Caret /></Split>
            </MeasureCol>
          </PanelBody>
          <PanelLabel>Measure</PanelLabel>
        </Panel>

        <Panel $w={81}>
          <PanelBody>
            <CreateGrid>
              <CreateGroup />
              <CreateSimilar />
              <CreateAssembly />
              <CreateParts />
            </CreateGrid>
          </PanelBody>
          <PanelLabel>Create</PanelLabel>
        </Panel>
      </RibbonPanels>
    </Ribbon>

    <OptionsBar>
      <CheckBox>
        <svg width="11" height="11" viewBox="0 0 11 11"><path d="M1.500 6l3 3 5-7.500" fill="none" stroke="#111" strokeWidth="1.800" /></svg>
      </CheckBox>
      <OptionLabel $gap={2}>Multiple Alignment</OptionLabel>
      <OptionLabel $gap={14}>Prefer:</OptionLabel>
      <OptionLabel $gap={2}>
        <Combo $w={100}>Wall faces <Chevron c="#333" /></Combo>
      </OptionLabel>
    </OptionsBar>

    <Main>
      <PropertiesDock>
        <DockHeader>
          Properties
          <CloseX />
        </DockHeader>
        <DockBody>
          <TypeSelector>
            <TypeThumb><PlanThumb /></TypeThumb>
            <TypeName>Floor Plan</TypeName>
            <Caret c="#222" />
          </TypeSelector>
          <InstanceRow>
            <Combo $w={125}>Floor Plan: Level 1 <Chevron c="#333" /></Combo>
            <EditType><EditTypeIcon />Edit Type</EditType>
          </InstanceRow>
          <PropScroller>
            <PropList>
              <GroupHeader $lift>Graphics <DoubleUp /></GroupHeader>
              {graphicsProps.map((p) => (
                <PropRow key={p.name}>
                  <PropName $off={p.off}>{p.name}</PropName>
                  {renderValue(p)}
                </PropRow>
              ))}
              <GroupHeader>Identity Data <DoubleUp /></GroupHeader>
            </PropList>
            <PanelScroll>
              <ScrollEnd><Up /></ScrollEnd>
              <ScrollTrack><ScrollThumb /></ScrollTrack>
              <ScrollEnd><Chevron /></ScrollEnd>
            </PanelScroll>
          </PropScroller>
          <HelpRow>
            <HelpLink>Properties help</HelpLink>
            <ApplyButton>Apply</ApplyButton>
          </HelpRow>
        </DockBody>
        <DockTabs>
          <DockTab $active $w={60}>Properties</DockTab>
          <DockTab $w={152}>Project Browser - 0512_Ali...</DockTab>
        </DockTabs>
      </PropertiesDock>

      <ViewShell>
        <ViewColumn>
          <DrawingArea>
            <Plan />
            <ViewControls>
              <svg width="12" height="5" viewBox="0 0 12 5"><path d="M.5.500h11v4H.5z" fill="#ddd" stroke="#444" /></svg>
              <svg width="11" height="11" viewBox="0 0 11 11"><path d="M3.500.500h7v7h-7zM.5 3.500h7v7h-7z" fill="#fff" stroke="#444" /></svg>
              <svg width="11" height="11" viewBox="0 0 11 11">
                <path d="M1 1l9 9m0-9L1 10" stroke="#555" strokeWidth="2.800" />
                <path d="M1 1l9 9m0-9L1 10" stroke="#fff" strokeWidth="1" />
              </svg>
            </ViewControls>
            <NavBar>
              <NavBadge />
              <NavWheel><WheelIcon /></NavWheel>
              <Caret c="#999" />
              <NavDivider />
              <ZoomRegion />
              <NavCaret><Caret c="#999" /></NavCaret>
              <NavBadgeBottom />
            </NavBar>
          </DrawingArea>
          <ViewBar>
            <ViewScaleText>1/8" = 1'-0"</ViewScaleText>
            <ViewIcons>
              <VHatch />
              <VCube />
              <VSun />
              <VShadow />
              <VCrop off />
              <VCrop />
              <VGlasses />
              <BulbSlot><VBulb /></BulbSlot>
              <VCropFrame />
              <VBuilding />
              <ChevronLeft />
            </ViewIcons>
            <HScroll>
              <HThumb />
              <svg width="6" height="9" viewBox="0 0 6 9"><path d="M1 1l3.500 3.500L1 8" fill="none" stroke="#333" strokeWidth="1.600" /></svg>
            </HScroll>
          </ViewBar>
        </ViewColumn>
        <VScroll>
          <Up />
          <VThumb />
          <Chevron />
        </VScroll>
      </ViewShell>
    </Main>

    <StatusBar>
      <StatusText>Grids : Grid : B : Reference</StatusText>
      <StatusTool $w={27}><WorksetIcon /></StatusTool>
      <Combo $w={205} $off><span /> <Chevron c="#bbb" /></Combo>
      <StatusTool $w={57}><DesignOptIcon />:0</StatusTool>
      <StatusTool $w={24}><ListIcon /></StatusTool>
      <StatusTool $w={29}><ModelOff /></StatusTool>
      <Combo $w={156} $off>Main Model <Chevron c="#bbb" /></Combo>
      <RightTools>
        <StatusTool $w={26}><PickLink /></StatusTool>
        <StatusTool $w={26}><PickUnderlay /></StatusTool>
        <StatusTool $w={26}><PickPin /></StatusTool>
        <StatusTool $w={26}><PickFace /></StatusTool>
        <StatusTool $w={26}><DragIcon /></StatusTool>
        <StatusTool $w={32}><FilterIcon />:0</StatusTool>
      </RightTools>
    </StatusBar>

    <Watermark>InfiniteSkills<WatermarkThin>.com</WatermarkThin></Watermark>
  </Window>
)

export default App
